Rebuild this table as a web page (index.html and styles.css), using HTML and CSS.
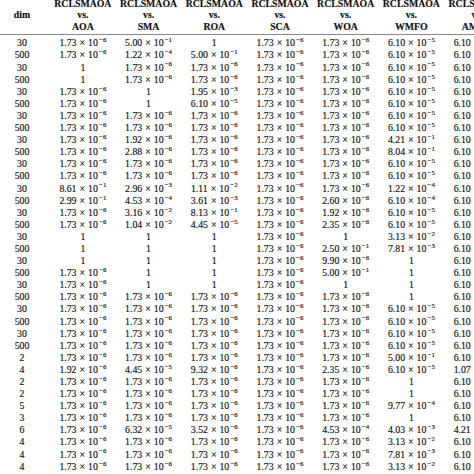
FILE: index.html
```html
<!DOCTYPE html>
<html>
<head>
<meta charset="utf-8">
<link rel="stylesheet" href="styles.css">
</head>
<body>
<table class="tbl">
<colgroup><col class="c-dim"><col class="c"><col class="c"><col class="c"><col class="c"><col class="c"><col class="c"><col class="c"></colgroup>
<thead>
<tr>
<th class="dim">dim</th>
<th>RCLSMAOA<br>vs.<br>AOA</th>
<th>RCLSMAOA<br>vs.<br>SMA</th>
<th>RCLSMAOA<br>vs.<br>ROA</th>
<th>RCLSMAOA<br>vs.<br>SCA</th>
<th>RCLSMAOA<br>vs.<br>WOA</th>
<th>RCLSMAOA<br>vs.<br>WMFO</th>
<th>RCLSMAOA<br>vs.<br>AMVO</th>
</tr>
</thead>
<tbody>
<tr><td class="dim">30</td><td>1.73<span class="x">×</span>10<sup>−6</sup></td><td>5.00<span class="x">×</span>10<sup>−1</sup></td><td>1</td><td>1.73<span class="x">×</span>10<sup>−6</sup></td><td>1.73<span class="x">×</span>10<sup>−6</sup></td><td>6.10<span class="x">×</span>10<sup>−5</sup></td><td>6.10<span class="x">×</span>10<sup>−5</sup></td></tr>
<tr><td class="dim">500</td><td>1.73<span class="x">×</span>10<sup>−6</sup></td><td>1.22<span class="x">×</span>10<sup>−4</sup></td><td>5.00<span class="x">×</span>10<sup>−1</sup></td><td>1.73<span class="x">×</span>10<sup>−6</sup></td><td>1.73<span class="x">×</span>10<sup>−6</sup></td><td>6.10<span class="x">×</span>10<sup>−5</sup></td><td>6.10<span class="x">×</span>10<sup>−5</sup></td></tr>
<tr><td class="dim">30</td><td>1</td><td>1.73<span class="x">×</span>10<sup>−6</sup></td><td>1.73<span class="x">×</span>10<sup>−6</sup></td><td>1.73<span class="x">×</span>10<sup>−6</sup></td><td>1.73<span class="x">×</span>10<sup>−6</sup></td><td>6.10<span class="x">×</span>10<sup>−5</sup></td><td>6.10<span class="x">×</span>10<sup>−5</sup></td></tr>
<tr><td class="dim">500</td><td>1</td><td>1.73<span class="x">×</span>10<sup>−6</sup></td><td>1.73<span class="x">×</span>10<sup>−6</sup></td><td>1.73<span class="x">×</span>10<sup>−6</sup></td><td>1.73<span class="x">×</span>10<sup>−6</sup></td><td>6.10<span class="x">×</span>10<sup>−5</sup></td><td>6.10<span class="x">×</span>10<sup>−5</sup></td></tr>
<tr><td class="dim">30</td><td>1.73<span class="x">×</span>10<sup>−6</sup></td><td>1</td><td>1.95<span class="x">×</span>10<sup>−3</sup></td><td>1.73<span class="x">×</span>10<sup>−6</sup></td><td>1.73<span class="x">×</span>10<sup>−6</sup></td><td>6.10<span class="x">×</span>10<sup>−5</sup></td><td>6.10<span class="x">×</span>10<sup>−5</sup></td></tr>
<tr><td class="dim">500</td><td>1.73<span class="x">×</span>10<sup>−6</sup></td><td>1</td><td>6.10<span class="x">×</span>10<sup>−5</sup></td><td>1.73<span class="x">×</span>10<sup>−6</sup></td><td>1.73<span class="x">×</span>10<sup>−6</sup></td><td>6.10<span class="x">×</span>10<sup>−5</sup></td><td>6.10<span class="x">×</span>10<sup>−5</sup></td></tr>
<tr><td class="dim">30</td><td>1.73<span class="x">×</span>10<sup>−6</sup></td><td>1.73<span class="x">×</span>10<sup>−6</sup></td><td>1.73<span class="x">×</span>10<sup>−6</sup></td><td>1.73<span class="x">×</span>10<sup>−6</sup></td><td>1.73<span class="x">×</span>10<sup>−6</sup></td><td>6.10<span class="x">×</span>10<sup>−5</sup></td><td>6.10<span class="x">×</span>10<sup>−5</sup></td></tr>
<tr><td class="dim">500</td><td>1.73<span class="x">×</span>10<sup>−6</sup></td><td>1.73<span class="x">×</span>10<sup>−6</sup></td><td>1.73<span class="x">×</span>10<sup>−6</sup></td><td>1.73<span class="x">×</span>10<sup>−6</sup></td><td>1.73<span class="x">×</span>10<sup>−6</sup></td><td>6.10<span class="x">×</span>10<sup>−5</sup></td><td>6.10<span class="x">×</span>10<sup>−5</sup></td></tr>
<tr><td class="dim">30</td><td>1.73<span class="x">×</span>10<sup>−6</sup></td><td>1.92<span class="x">×</span>10<sup>−6</sup></td><td>1.73<span class="x">×</span>10<sup>−6</sup></td><td>1.73<span class="x">×</span>10<sup>−6</sup></td><td>1.73<span class="x">×</span>10<sup>−6</sup></td><td>4.21<span class="x">×</span>10<sup>−1</sup></td><td>6.10<span class="x">×</span>10<sup>−5</sup></td></tr>
<tr><td class="dim">500</td><td>1.73<span class="x">×</span>10<sup>−6</sup></td><td>2.88<span class="x">×</span>10<sup>−6</sup></td><td>1.73<span class="x">×</span>10<sup>−6</sup></td><td>1.73<span class="x">×</span>10<sup>−6</sup></td><td>1.73<span class="x">×</span>10<sup>−6</sup></td><td>8.04<span class="x">×</span>10<sup>−1</sup></td><td>6.10<span class="x">×</span>10<sup>−5</sup></td></tr>
<tr><td class="dim">30</td><td>1.73<span class="x">×</span>10<sup>−6</sup></td><td>1.73<span class="x">×</span>10<sup>−6</sup></td><td>1.73<span class="x">×</span>10<sup>−6</sup></td><td>1.73<span class="x">×</span>10<sup>−6</sup></td><td>1.73<span class="x">×</span>10<sup>−6</sup></td><td>6.10<span class="x">×</span>10<sup>−5</sup></td><td>6.10<span class="x">×</span>10<sup>−5</sup></td></tr>
<tr><td class="dim">500</td><td>1.73<span class="x">×</span>10<sup>−6</sup></td><td>1.73<span class="x">×</span>10<sup>−6</sup></td><td>1.73<span class="x">×</span>10<sup>−6</sup></td><td>1.73<span class="x">×</span>10<sup>−6</sup></td><td>1.73<span class="x">×</span>10<sup>−6</sup></td><td>6.10<span class="x">×</span>10<sup>−5</sup></td><td>6.10<span class="x">×</span>10<sup>−5</sup></td></tr>
<tr><td class="dim">30</td><td>8.61<span class="x">×</span>10<sup>−1</sup></td><td>2.96<span class="x">×</span>10<sup>−3</sup></td><td>1.11<span class="x">×</span>10<sup>−2</sup></td><td>1.73<span class="x">×</span>10<sup>−6</sup></td><td>1.73<span class="x">×</span>10<sup>−6</sup></td><td>1.22<span class="x">×</span>10<sup>−4</sup></td><td>6.10<span class="x">×</span>10<sup>−5</sup></td></tr>
<tr><td class="dim">500</td><td>2.99<span class="x">×</span>10<sup>−1</sup></td><td>4.53<span class="x">×</span>10<sup>−4</sup></td><td>3.61<span class="x">×</span>10<sup>−3</sup></td><td>1.73<span class="x">×</span>10<sup>−6</sup></td><td>2.60<span class="x">×</span>10<sup>−6</sup></td><td>6.10<span class="x">×</span>10<sup>−4</sup></td><td>6.10<span class="x">×</span>10<sup>−5</sup></td></tr>
<tr><td class="dim">30</td><td>1.73<span class="x">×</span>10<sup>−6</sup></td><td>3.16<span class="x">×</span>10<sup>−2</sup></td><td>8.13<span class="x">×</span>10<sup>−1</sup></td><td>1.73<span class="x">×</span>10<sup>−6</sup></td><td>1.92<span class="x">×</span>10<sup>−6</sup></td><td>6.10<span class="x">×</span>10<sup>−5</sup></td><td>6.10<span class="x">×</span>10<sup>−5</sup></td></tr>
<tr><td class="dim">500</td><td>1.73<span class="x">×</span>10<sup>−6</sup></td><td>1.04<span class="x">×</span>10<sup>−2</sup></td><td>4.45<span class="x">×</span>10<sup>−5</sup></td><td>1.73<span class="x">×</span>10<sup>−6</sup></td><td>2.35<span class="x">×</span>10<sup>−6</sup></td><td>6.10<span class="x">×</span>10<sup>−5</sup></td><td>6.10<span class="x">×</span>10<sup>−5</sup></td></tr>
<tr><td class="dim">30</td><td>1</td><td>1</td><td>1</td><td>1.73<span class="x">×</span>10<sup>−6</sup></td><td>1</td><td>3.13<span class="x">×</span>10<sup>−2</sup></td><td>6.10<span class="x">×</span>10<sup>−5</sup></td></tr>
<tr><td class="dim">500</td><td>1</td><td>1</td><td>1</td><td>1.73<span class="x">×</span>10<sup>−6</sup></td><td>2.50<span class="x">×</span>10<sup>−1</sup></td><td>7.81<span class="x">×</span>10<sup>−3</sup></td><td>6.10<span class="x">×</span>10<sup>−5</sup></td></tr>
<tr><td class="dim">30</td><td>1</td><td>1</td><td>1</td><td>1.73<span class="x">×</span>10<sup>−6</sup></td><td>9.90<span class="x">×</span>10<sup>−6</sup></td><td>1</td><td>6.10<span class="x">×</span>10<sup>−5</sup></td></tr>
<tr><td class="dim">500</td><td>1.73<span class="x">×</span>10<sup>−6</sup></td><td>1</td><td>1</td><td>1.73<span class="x">×</span>10<sup>−6</sup></td><td>5.00<span class="x">×</span>10<sup>−1</sup></td><td>1</td><td>6.10<span class="x">×</span>10<sup>−5</sup></td></tr>
<tr><td class="dim">30</td><td>1.73<span class="x">×</span>10<sup>−6</sup></td><td>1</td><td>1</td><td>1.73<span class="x">×</span>10<sup>−6</sup></td><td>1</td><td>1</td><td>6.10<span class="x">×</span>10<sup>−5</sup></td></tr>
<tr><td class="dim">500</td><td>1.73<span class="x">×</span>10<sup>−6</sup></td><td>1.73<span class="x">×</span>10<sup>−6</sup></td><td>1.73<span class="x">×</span>10<sup>−6</sup></td><td>1.73<span class="x">×</span>10<sup>−6</sup></td><td>1.73<span class="x">×</span>10<sup>−6</sup></td><td>1</td><td>6.10<span class="x">×</span>10<sup>−5</sup></td></tr>
<tr><td class="dim">30</td><td>1.73<span class="x">×</span>10<sup>−6</sup></td><td>1.73<span class="x">×</span>10<sup>−6</sup></td><td>1.73<span class="x">×</span>10<sup>−6</sup></td><td>1.73<span class="x">×</span>10<sup>−6</sup></td><td>1.73<span class="x">×</span>10<sup>−6</sup></td><td>6.10<span class="x">×</span>10<sup>−5</sup></td><td>6.10<span class="x">×</span>10<sup>−5</sup></td></tr>
<tr><td class="dim">500</td><td>1.73<span class="x">×</span>10<sup>−6</sup></td><td>1.73<span class="x">×</span>10<sup>−6</sup></td><td>1.73<span class="x">×</span>10<sup>−6</sup></td><td>1.73<span class="x">×</span>10<sup>−6</sup></td><td>1.73<span class="x">×</span>10<sup>−6</sup></td><td>6.10<span class="x">×</span>10<sup>−5</sup></td><td>6.10<span class="x">×</span>10<sup>−5</sup></td></tr>
<tr><td class="dim">30</td><td>1.73<span class="x">×</span>10<sup>−6</sup></td><td>1.73<span class="x">×</span>10<sup>−6</sup></td><td>1.73<span class="x">×</span>10<sup>−6</sup></td><td>1.73<span class="x">×</span>10<sup>−6</sup></td><td>1.73<span class="x">×</span>10<sup>−6</sup></td><td>6.10<span class="x">×</span>10<sup>−5</sup></td><td>6.10<span class="x">×</span>10<sup>−5</sup></td></tr>
<tr><td class="dim">500</td><td>1.73<span class="x">×</span>10<sup>−6</sup></td><td>1.73<span class="x">×</span>10<sup>−6</sup></td><td>1.73<span class="x">×</span>10<sup>−6</sup></td><td>1.73<span class="x">×</span>10<sup>−6</sup></td><td>1.73<span class="x">×</span>10<sup>−6</sup></td><td>6.10<span class="x">×</span>10<sup>−5</sup></td><td>6.10<span class="x">×</span>10<sup>−5</sup></td></tr>
<tr><td class="dim">2</td><td>1.73<span class="x">×</span>10<sup>−6</sup></td><td>1.73<span class="x">×</span>10<sup>−6</sup></td><td>1.73<span class="x">×</span>10<sup>−6</sup></td><td>1.73<span class="x">×</span>10<sup>−6</sup></td><td>1.73<span class="x">×</span>10<sup>−6</sup></td><td>5.00<span class="x">×</span>10<sup>−1</sup></td><td>6.10<span class="x">×</span>10<sup>−5</sup></td></tr>
<tr><td class="dim">4</td><td>1.92<span class="x">×</span>10<sup>−6</sup></td><td>4.45<span class="x">×</span>10<sup>−5</sup></td><td>9.32<span class="x">×</span>10<sup>−6</sup></td><td>1.73<span class="x">×</span>10<sup>−6</sup></td><td>2.35<span class="x">×</span>10<sup>−6</sup></td><td>6.10<span class="x">×</span>10<sup>−5</sup></td><td>1.07<span class="x">×</span>10<sup>−1</sup></td></tr>
<tr><td class="dim">2</td><td>1.73<span class="x">×</span>10<sup>−6</sup></td><td>1.73<span class="x">×</span>10<sup>−6</sup></td><td>1.73<span class="x">×</span>10<sup>−6</sup></td><td>1.73<span class="x">×</span>10<sup>−6</sup></td><td>1.73<span class="x">×</span>10<sup>−6</sup></td><td>1</td><td>6.10<span class="x">×</span>10<sup>−5</sup></td></tr>
<tr><td class="dim">2</td><td>1.73<span class="x">×</span>10<sup>−6</sup></td><td>1.73<span class="x">×</span>10<sup>−6</sup></td><td>1.73<span class="x">×</span>10<sup>−6</sup></td><td>1.73<span class="x">×</span>10<sup>−6</sup></td><td>1.73<span class="x">×</span>10<sup>−6</sup></td><td>1</td><td>6.10<span class="x">×</span>10<sup>−5</sup></td></tr>
<tr><td class="dim">5</td><td>1.73<span class="x">×</span>10<sup>−6</sup></td><td>1.73<span class="x">×</span>10<sup>−6</sup></td><td>1.73<span class="x">×</span>10<sup>−6</sup></td><td>1.73<span class="x">×</span>10<sup>−6</sup></td><td>1.73<span class="x">×</span>10<sup>−6</sup></td><td>9.77<span class="x">×</span>10<sup>−4</sup></td><td>6.10<span class="x">×</span>10<sup>−5</sup></td></tr>
<tr><td class="dim">3</td><td>1.73<span class="x">×</span>10<sup>−6</sup></td><td>1.73<span class="x">×</span>10<sup>−6</sup></td><td>1.73<span class="x">×</span>10<sup>−6</sup></td><td>1.73<span class="x">×</span>10<sup>−6</sup></td><td>1.73<span class="x">×</span>10<sup>−6</sup></td><td>1</td><td>6.10<span class="x">×</span>10<sup>−5</sup></td></tr>
<tr><td class="dim">6</td><td>1.73<span class="x">×</span>10<sup>−6</sup></td><td>6.32<span class="x">×</span>10<sup>−5</sup></td><td>3.52<span class="x">×</span>10<sup>−6</sup></td><td>1.73<span class="x">×</span>10<sup>−6</sup></td><td>4.53<span class="x">×</span>10<sup>−4</sup></td><td>4.03<span class="x">×</span>10<sup>−3</sup></td><td>4.21<span class="x">×</span>10<sup>−1</sup></td></tr>
<tr><td class="dim">4</td><td>1.73<span class="x">×</span>10<sup>−6</sup></td><td>1.73<span class="x">×</span>10<sup>−6</sup></td><td>1.73<span class="x">×</span>10<sup>−6</sup></td><td>1.73<span class="x">×</span>10<sup>−6</sup></td><td>1.73<span class="x">×</span>10<sup>−6</sup></td><td>3.13<span class="x">×</span>10<sup>−2</sup></td><td>6.10<span class="x">×</span>10<sup>−5</sup></td></tr>
<tr><td class="dim">4</td><td>1.73<span class="x">×</span>10<sup>−6</sup></td><td>1.73<span class="x">×</span>10<sup>−6</sup></td><td>1.73<span class="x">×</span>10<sup>−6</sup></td><td>1.73<span class="x">×</span>10<sup>−6</sup></td><td>1.73<span class="x">×</span>10<sup>−6</sup></td><td>7.81<span class="x">×</span>10<sup>−3</sup></td><td>6.10<span class="x">×</span>10<sup>−5</sup></td></tr>
<tr><td class="dim">4</td><td>1.73<span class="x">×</span>10<sup>−6</sup></td><td>1.73<span class="x">×</span>10<sup>−6</sup></td><td>1.73<span class="x">×</span>10<sup>−6</sup></td><td>1.73<span class="x">×</span>10<sup>−6</sup></td><td>1.73<span class="x">×</span>10<sup>−6</sup></td><td>3.13<span class="x">×</span>10<sup>−2</sup></td><td>6.10<span class="x">×</span>10<sup>−5</sup></td></tr>
</tbody>
</table>
</body>
</html>
```

FILE: styles.css
```css
html, body {
  margin: 0;
  padding: 0;
  background: #ffffff;
  overflow: hidden;
}

body {
  font-family: "Liberation Serif", "Times New Roman", serif;
  color: #111111;
}

.tbl {
  border-collapse: collapse;
  table-layout: fixed;
  width: 510px;
  margin-top: -2.5px;
  font-size: 9.8px;
  -webkit-text-stroke: 0.15px #111111;
}

.tbl .c-dim {
  width: 50px;
}

.tbl .c {
  width: 65.7px;
}

.tbl th {
  font-weight: bold;
  padding: 0 0 1.5px 0;
  line-height: 11.6px;
  text-align: center;
  vertical-align: middle;
  border-bottom: 1px solid #8a8a8a;
  white-space: nowrap;
}

.tbl th.dim {
  line-height: 34.8px;
}

.tbl td {
  padding: 0;
  line-height: 12.1px;
  text-align: center;
  white-space: nowrap;
}

.tbl .dim {
  padding-right: 6px;
}

.tbl tbody tr:first-child td {
  padding-top: 2.6px;
}

.tbl .x {
  padding: 0 3px;
}

.tbl sup {
  font-size: 0.7em;
  line-height: 0;
  vertical-align: 0.6em;
  margin-left: 1.2px;
}
```
